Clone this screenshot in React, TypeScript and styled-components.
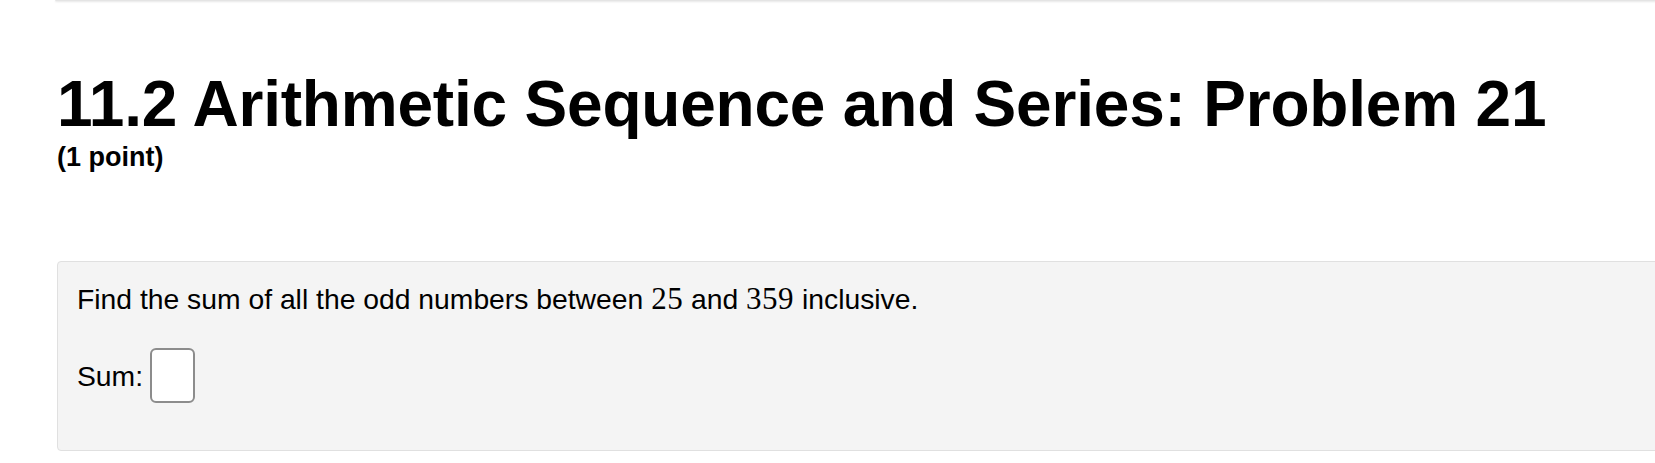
import React from 'react';
import styled, { createGlobalStyle } from 'styled-components';

const GlobalStyle = createGlobalStyle`
  html, body {
    margin: 0;
    padding: 0;
    background: #ffffff;
    overflow: hidden;
  }
  body {
    font-family: 'Liberation Sans', Arial, Helvetica, sans-serif;
    color: #000;
  }
`;

const Page = styled.div`
  display: flex;
  flex-direction: column;
  padding-left: 57px;
  min-height: 463px;
`;

const TopBar = styled.div`
  margin-left: -2px;
  margin-right: -10px;
  height: 1px;
  background: #e4e4e4;
  border-bottom-left-radius: 4px;
  box-shadow: 0 1px 2px rgba(0, 0, 0, 0.14);
`;

const Title = styled.h1`
  margin: 68px 0 0 0;
  font-size: 64px;
  line-height: 70px;
  font-weight: 700;
  letter-spacing: -0.2px;
`;

const Points = styled.div`
  margin-top: 2px;
  font-size: 27px;
  line-height: 32px;
  font-weight: 700;
`;

const ProblemBox = styled.div`
  margin-top: 88px;
  margin-right: -12px;
  padding: 18px 19px 47px 19px;
  background: #f4f4f4;
  border: 1px solid #e0e0e0;
  border-radius: 4px;
  display: flex;
  flex-direction: column;
  gap: 30px;
`;

const Statement = styled.p`
  margin: 0;
  font-size: 28.3px;
  line-height: 38px;
`;

const MathNum = styled.span`
  font-family: 'Liberation Serif', 'Times New Roman', serif;
  font-size: 31px;
  letter-spacing: 0.5px;
`;

const AnswerRow = styled.label`
  display: flex;
  align-items: center;
  gap: 7px;
  font-size: 28.3px;
  line-height: 38px;
`;

const AnswerInput = styled.input`
  box-sizing: border-box;
  width: 45px;
  height: 55px;
  margin: 0;
  padding: 0 6px;
  border: 2px solid #8c8c8c;
  border-radius: 6px;
  background: #fff;
  font-size: 22px;
  font-family: inherit;
  outline: none;
`;

export default function App() {
  return (
    <>
      <GlobalStyle />
      <Page>
        <TopBar />
        <Title>11.2 Arithmetic Sequence and Series: Problem 21</Title>
        <Points>(1 point)</Points>
        <ProblemBox>
          <Statement>
            Find the sum of all the odd numbers between <MathNum>25</MathNum> and{' '}
            <MathNum>359</MathNum> inclusive.
          </Statement>
          <AnswerRow>
            Sum:
            <AnswerInput type="text" aria-label="Sum" />
          </AnswerRow>
        </ProblemBox>
      </Page>
    </>
  );
}
